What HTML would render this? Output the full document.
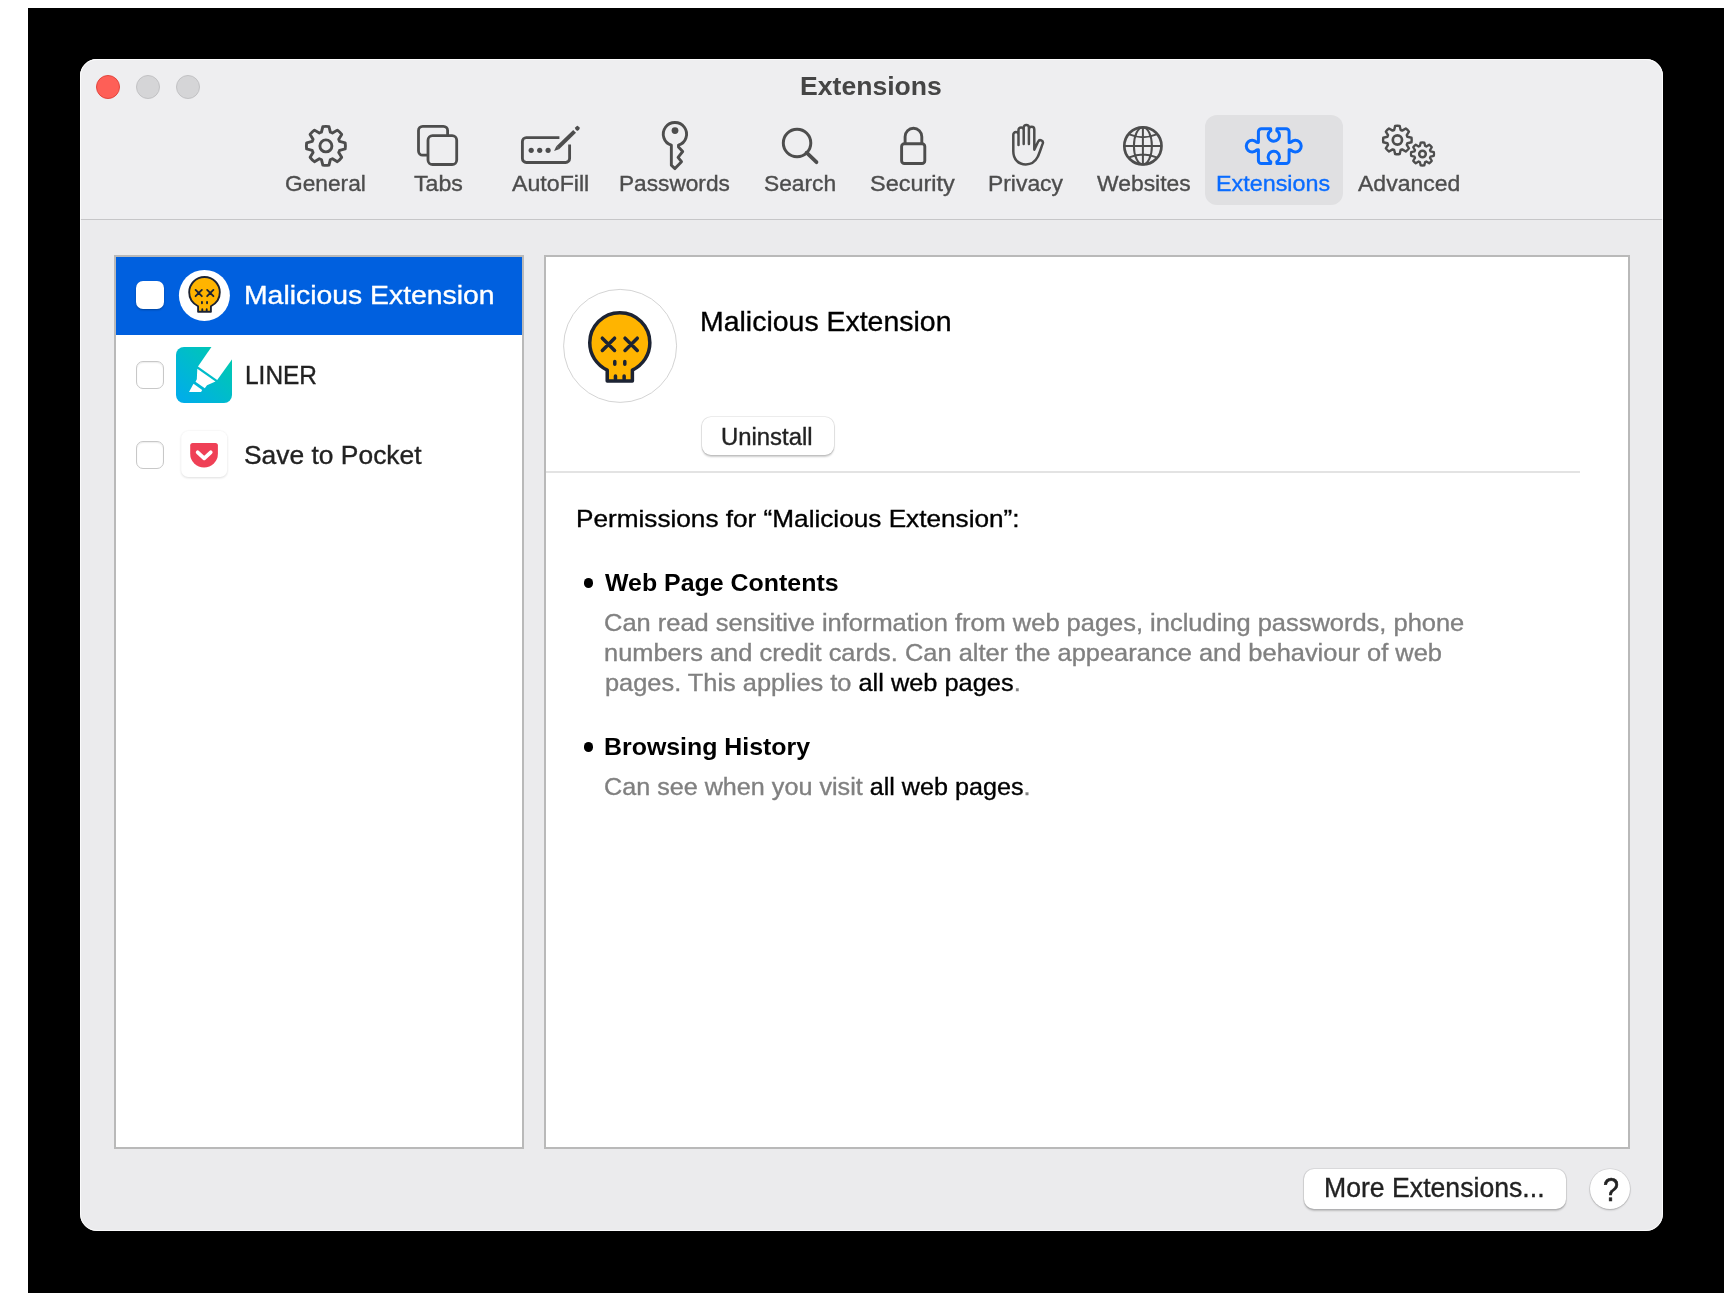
<!DOCTYPE html>
<html><head><meta charset="utf-8"><title>Extensions</title>
<style>
html,body{margin:0;padding:0;background:#fff;}
body{width:1731px;height:1298px;position:relative;overflow:hidden;font-family:"Liberation Sans",sans-serif;}
.abs{position:absolute;box-sizing:border-box;}
.t{position:absolute;white-space:nowrap;will-change:opacity;}
#black{left:28px;top:8px;width:1696px;height:1285px;background:#000;}
#win{left:80px;top:59px;width:1583px;height:1172px;background:#ebebed;border-radius:17px;overflow:hidden;}
#tb{left:0;top:0;width:1583px;height:161.2px;background:#eeeef0;border-bottom:1.3px solid #c6c6c8;}
.tl{width:24.4px;height:24.4px;border-radius:50%;top:74.6px;}
.pane{background:#fff;border:2px solid #b9b9b9;}
.btn{background:#fff;box-shadow:0 0 0 0.8px rgba(0,0,0,0.09),0 1.2px 2px rgba(0,0,0,0.20);}
.cb{width:28px;height:28px;border-radius:7px;background:#fff;left:136px;}
</style></head><body>
<div class="abs" id="black"></div>
<div class="abs" id="win"><div class="abs" id="tb"></div></div>
<div class="abs" style="left:80px;top:59px;width:1583px;height:1172px;border-radius:17px;border:1px solid rgba(255,255,255,.8);"></div>
<div class="abs tl" style="left:95.8px;background:#fe5f57;border:1px solid #e2463e;"></div>
<div class="abs tl" style="left:135.7px;background:#d5d5d7;border:1px solid #c2c2c4;"></div>
<div class="abs tl" style="left:175.8px;background:#d5d5d7;border:1px solid #c2c2c4;"></div>
<div class="abs" style="left:1205px;top:115px;width:138px;height:89.5px;border-radius:12px;background:#e0e0e2;"></div>
<div class="abs pane" style="left:114px;top:255px;width:410px;height:894px;"></div>
<div class="abs" style="left:116px;top:257px;width:406px;height:78px;background:#0060df;"></div>
<div class="abs cb" style="top:281px;box-shadow:0 1px 2px rgba(0,0,0,.3);"></div>
<div class="abs cb" style="top:361px;border:1px solid #c8c8c8;box-shadow:inset 0 1px 1.500px rgba(0,0,0,.08);"></div>
<div class="abs cb" style="top:441px;border:1px solid #c8c8c8;box-shadow:inset 0 1px 1.500px rgba(0,0,0,.08);"></div>
<div class="abs pane" style="left:544px;top:255px;width:1086px;height:894px;"></div>
<div class="abs" style="left:546px;top:471px;width:1034px;height:2px;background:#e3e3e3;"></div>
<div class="abs btn" style="left:701.6px;top:416.6px;width:132.8px;height:38.8px;border-radius:9px;"></div>
<div class="abs btn" style="left:1303.6px;top:1168.9px;width:262.6px;height:40.1px;border-radius:10px;"></div>
<div class="abs btn" style="left:1590px;top:1169px;width:40px;height:40px;border-radius:50%;"></div>
<div class="abs" style="left:583.5px;top:578.35px;width:9.5px;height:9.5px;border-radius:50%;background:#000;"></div>
<div class="abs" style="left:583.5px;top:742.35px;width:9.5px;height:9.5px;border-radius:50%;background:#000;"></div>
<svg class="abs" style="left:0;top:0" width="1731" height="1298" viewBox="0 0 1731 1298">
<path d="M321.45 132.20 L322.85 126.64 A19.50 19.50 0 0 1 328.95 126.64 L330.35 132.20 A14.40 14.40 0 0 1 332.44 133.07 L337.36 130.12 A19.50 19.50 0 0 1 341.68 134.44 L338.73 139.36 A14.40 14.40 0 0 1 339.60 141.45 L345.16 142.85 A19.50 19.50 0 0 1 345.16 148.95 L339.60 150.35 A14.40 14.40 0 0 1 338.73 152.44 L341.68 157.36 A19.50 19.50 0 0 1 337.36 161.68 L332.44 158.73 A14.40 14.40 0 0 1 330.35 159.60 L328.95 165.16 A19.50 19.50 0 0 1 322.85 165.16 L321.45 159.60 A14.40 14.40 0 0 1 319.36 158.73 L314.44 161.68 A19.50 19.50 0 0 1 310.12 157.36 L313.07 152.44 A14.40 14.40 0 0 1 312.20 150.35 L306.64 148.95 A19.50 19.50 0 0 1 306.64 142.85 L312.20 141.45 A14.40 14.40 0 0 1 313.07 139.36 L310.12 134.44 A19.50 19.50 0 0 1 314.44 130.12 L319.36 133.07 A14.40 14.40 0 0 1 321.45 132.20 Z" fill="none" stroke="#4d4d4d" stroke-width="2.9" stroke-linejoin="round"/>
<circle cx="325.9" cy="145.9" r="6" fill="none" stroke="#4d4d4d" stroke-width="2.9"/>
<path d="M428 155.2 H422.7 a4.2 4.2 0 0 1 -4.2 -4.2 V130.5 a4.2 4.2 0 0 1 4.2 -4.2 H443.4 a4.2 4.2 0 0 1 4.2 4.2 V135.6" fill="none" stroke="#4d4d4d" stroke-width="2.8"/>
<rect x="428" y="135.6" width="28.7" height="28.9" rx="4.6" fill="none" stroke="#4d4d4d" stroke-width="2.8"/>
<path d="M559.4 137.6 H526.3 a3.9 3.9 0 0 0 -3.9 3.9 V158.6 a3.9 3.9 0 0 0 3.9 3.9 H565.7 a3.9 3.9 0 0 0 3.9 -3.9 V144.4" fill="none" stroke="#4d4d4d" stroke-width="2.85"/>
<circle cx="531.2" cy="150.3" r="2.6" fill="#4d4d4d"/>
<circle cx="539.7" cy="150.3" r="2.6" fill="#4d4d4d"/>
<circle cx="548.1" cy="150.3" r="2.6" fill="#4d4d4d"/>
<path d="M558 147.5 L574.6 131.4" stroke="#4d4d4d" stroke-width="4"/>
<path d="M554.1 150.9 L556.4 145.9 L559.6 149.1 Z" fill="#4d4d4d"/>
<rect x="575.3" y="126.2" width="4.2" height="4.2" rx="1.5" transform="rotate(45 577.4 128.3)" fill="#4d4d4d"/>
<path d="M671.35 145.2 A11.65 11.65 0 1 1 678.5 145.2 L678.5 146.9 L682.7 151.5 L678.05 157.3 L681.5 161.7 L674.96 168.6 L671.35 165.2 Z" fill="none" stroke="#4d4d4d" stroke-width="2.9" stroke-linejoin="round"/>
<circle cx="675" cy="130.6" r="3.4" fill="#4d4d4d"/>
<circle cx="797.05" cy="142.95" r="13.75" fill="none" stroke="#4d4d4d" stroke-width="2.95"/>
<path d="M806.6 152.600 L816.500 162.200" stroke="#4d4d4d" stroke-width="3.7" stroke-linecap="round"/>
<rect x="901.6" y="143.8" width="23.2" height="19.7" rx="2.8" fill="none" stroke="#4d4d4d" stroke-width="2.9"/>
<path d="M905.1 143.8 V136.65 a8.35 8.35 0 0 1 16.7 0 V143.8" fill="none" stroke="#4d4d4d" stroke-width="2.9"/>
<path d="M1018.5 134.7 A2.6 2.6 0 0 0 1013.3 134.7 V151.3 C1013.3 159.5 1018.5 164.4 1025.8 164.4 C1032.5 164.4 1035.8 160.5 1037.6 157 C1039.6 153 1041 148 1042.8 143.4 A2.5 2.5 0 0 0 1038.2 141.5 L1034.3 149.6 V129.5 A2.7 2.7 0 0 0 1028.9 129.5 M1018.5 145 V130 A2.6 2.6 0 0 1 1023.7 130 M1023.7 144 V127.5 A2.6 2.6 0 0 1 1028.9 127.5 V144" fill="none" stroke="#4d4d4d" stroke-width="2.5" stroke-linejoin="round" stroke-linecap="round"/>
<circle cx="1142.9" cy="145.9" r="18.6" fill="none" stroke="#4d4d4d" stroke-width="2.7"/>
<ellipse cx="1142.9" cy="145.9" rx="9" ry="18.6" fill="none" stroke="#4d4d4d" stroke-width="2"/>
<path d="M1142.9 127.3 V164.5 M1124.3 145.9 H1161.5 M1129.2 134.4 Q1142.9 140 1156.6 134.4 M1129.2 157.4 Q1142.9 151.8 1156.6 157.4" fill="none" stroke="#4d4d4d" stroke-width="2"/>
<path d="M1261.4 128.7 H1270.6 L1270.8 130.8 A5.66 5.66 0 1 0 1276.8 130.8 L1277 128.7 H1286.1 a3 3 0 0 1 3 3 V142.4 L1290.9 142.2 A5.9 5.9 0 1 1 1290.9 150 L1289.1 149.8 V160.5 a3 3 0 0 1 -3 3 H1277 L1276.8 161.8 A5.66 5.66 0 1 0 1270.8 161.8 L1270.6 163.5 H1261.4 a3 3 0 0 1 -3 -3 V149.8 L1256.6 150 A5.9 5.9 0 1 1 1256.6 142.2 L1258.4 142.4 V131.7 a3 3 0 0 1 3 -3 Z" fill="none" stroke="#0a6cff" stroke-width="3" stroke-linejoin="round"/>
<path d="M1394.16 130.01 L1395.16 125.88 A14.30 14.30 0 0 1 1399.64 125.88 L1400.64 130.01 A10.50 10.50 0 0 1 1402.17 130.64 L1405.81 128.43 A14.30 14.30 0 0 1 1408.97 131.59 L1406.76 135.23 A10.50 10.50 0 0 1 1407.39 136.76 L1411.52 137.76 A14.30 14.30 0 0 1 1411.52 142.24 L1407.39 143.24 A10.50 10.50 0 0 1 1406.76 144.77 L1408.97 148.41 A14.30 14.30 0 0 1 1405.81 151.57 L1402.17 149.36 A10.50 10.50 0 0 1 1400.64 149.99 L1399.64 154.12 A14.30 14.30 0 0 1 1395.16 154.12 L1394.16 149.99 A10.50 10.50 0 0 1 1392.63 149.36 L1388.99 151.57 A14.30 14.30 0 0 1 1385.83 148.41 L1388.04 144.77 A10.50 10.50 0 0 1 1387.41 143.24 L1383.28 142.24 A14.30 14.30 0 0 1 1383.28 137.76 L1387.41 136.76 A10.50 10.50 0 0 1 1388.04 135.23 L1385.83 131.59 A14.30 14.30 0 0 1 1388.99 128.43 L1392.63 130.64 A10.50 10.50 0 0 1 1394.16 130.01 Z" fill="none" stroke="#4d4d4d" stroke-width="2.4" stroke-linejoin="round"/>
<circle cx="1397.4" cy="140" r="4.6" fill="none" stroke="#4d4d4d" stroke-width="2.7"/>
<path d="M1419.90 146.01 L1420.70 142.64 A11.50 11.50 0 0 1 1424.30 142.64 L1425.10 146.01 A8.40 8.40 0 0 1 1426.31 146.52 L1429.26 144.70 A11.50 11.50 0 0 1 1431.80 147.24 L1429.98 150.19 A8.40 8.40 0 0 1 1430.49 151.40 L1433.86 152.20 A11.50 11.50 0 0 1 1433.86 155.80 L1430.49 156.60 A8.40 8.40 0 0 1 1429.98 157.81 L1431.80 160.76 A11.50 11.50 0 0 1 1429.26 163.30 L1426.31 161.48 A8.40 8.40 0 0 1 1425.10 161.99 L1424.30 165.36 A11.50 11.50 0 0 1 1420.70 165.36 L1419.90 161.99 A8.40 8.40 0 0 1 1418.69 161.48 L1415.74 163.30 A11.50 11.50 0 0 1 1413.20 160.76 L1415.02 157.81 A8.40 8.40 0 0 1 1414.51 156.60 L1411.14 155.80 A11.50 11.50 0 0 1 1411.14 152.20 L1414.51 151.40 A8.40 8.40 0 0 1 1415.02 150.19 L1413.20 147.24 A11.50 11.50 0 0 1 1415.74 144.70 L1418.69 146.52 A8.40 8.40 0 0 1 1419.90 146.01 Z" fill="none" stroke="#4d4d4d" stroke-width="2.3" stroke-linejoin="round"/>
<circle cx="1422.5" cy="154" r="3.3" fill="none" stroke="#4d4d4d" stroke-width="2.5"/>
<circle cx="204.4" cy="295.4" r="25.5" fill="#fff"/>
<g transform="translate(204.5 294.6) scale(0.567)">
<path d="M-11.3 30.3 V20.5 C-21.000 15.700 -27.000 6.500 -27.000 -4.000 A27 27 0 0 1 27 -4 C27.000 6.500 21.000 15.700 11.300 20.500 V30.3 Z" fill="#ffb400" stroke="#1c2333" stroke-width="3.3" stroke-linejoin="round"/>
<path d="M-15.7 -8.2 L-4.7 2.8 M-4.7 -8.2 L-15.7 2.8 M4.7 -8.2 L15.7 2.8 M15.7 -8.2 L4.7 2.8" stroke="#1c2333" stroke-width="3.3" stroke-linecap="round"/>
<path d="M-4.5 12.8 V15.2 M4.5 12.8 V15.2" stroke="#1c2333" stroke-width="3.3" stroke-linecap="round"/>
<path d="M-3.9 25.8 V28.7 M3.9 25.8 V28.7" stroke="#1c2333" stroke-width="3.3" stroke-linecap="round"/>
</g>
<defs><linearGradient id="lg" x1="0" y1="1" x2="1" y2="0"><stop offset="0.1" stop-color="#00aee8"/><stop offset="0.9" stop-color="#00c9b0"/></linearGradient><clipPath id="lc"><rect x="176" y="347" width="56" height="56" rx="8"/></clipPath></defs>
<rect x="176" y="347" width="56" height="56" rx="8" fill="url(#lg)"/>
<path d="M212.1 346 L198 366.4 L217.2 379.9 L233 358 L233 346 Z" fill="#fff"/><g clip-path="url(#lc)" fill="#fff"><path d="M197.3 368.7 L215.5 381.6 L207 385.3 L204.8 388.3 L195.5 381.8 L196.8 379.3 Z"/><path d="M193.5 383.8 L202.2 390 L201.1 391.9 L189 391.9 Z"/></g>
<filter id="bl" x="-20%" y="-20%" width="140%" height="140%"><feGaussianBlur stdDeviation="1.3"/></filter>
<rect x="181.2" y="431.6" width="46" height="46.500" rx="7" fill="#000" opacity="0.13" filter="url(#bl)"/>
<rect x="181.2" y="431.1" width="46" height="46" rx="7" fill="#fff"/>
<path d="M192.7 442.9 H215.4 a2.500 2.500 0 0 1 2.500 2.500 V453.700 a13.850 13.850 0 0 1 -27.700 0 V445.400 a2.500 2.500 0 0 1 2.500 -2.500 Z" fill="#ef4056"/>
<path d="M197.7 452.3 L204.200 458.300 L210.700 452.300" fill="none" stroke="#fff" stroke-width="3.8" stroke-linecap="round" stroke-linejoin="round"/>
<circle cx="620.1" cy="345.9" r="56.5" fill="#fff" stroke="#d4d4d4" stroke-width="1"/>
<g transform="translate(619.8 347.3) scale(1.113)">
<path d="M-11.3 30.3 V20.5 C-21.000 15.700 -27.000 6.500 -27.000 -4.000 A27 27 0 0 1 27 -4 C27.000 6.500 21.000 15.700 11.300 20.500 V30.3 Z" fill="#ffb400" stroke="#1c2333" stroke-width="3.15" stroke-linejoin="round"/>
<path d="M-15.7 -8.2 L-4.7 2.8 M-4.7 -8.2 L-15.7 2.8 M4.7 -8.2 L15.7 2.8 M15.7 -8.2 L4.7 2.8" stroke="#1c2333" stroke-width="3.15" stroke-linecap="round"/>
<path d="M-4.5 12.8 V15.2 M4.5 12.8 V15.2" stroke="#1c2333" stroke-width="3.15" stroke-linecap="round"/>
<path d="M-3.9 25.8 V28.7 M3.9 25.8 V28.7" stroke="#1c2333" stroke-width="3.15" stroke-linecap="round"/>
</g>
</svg>
<div class="t" id="lb_General" style="top:168.73px;font-size:22px;line-height:29px;color:#4d4d4d;font-weight:400;left:284.97px;transform:scaleX(1.0329);transform-origin:0 50%;-webkit-text-stroke:0.35px;">General</div>
<div class="t" id="lb_Tabs" style="top:168.73px;font-size:22px;line-height:29px;color:#4d4d4d;font-weight:400;left:413.77px;transform:scaleX(1.0511);transform-origin:0 50%;-webkit-text-stroke:0.35px;">Tabs</div>
<div class="t" id="lb_AutoFill" style="top:168.73px;font-size:22px;line-height:29px;color:#4d4d4d;font-weight:400;left:512.00px;transform:scaleX(1.0528);transform-origin:0 50%;-webkit-text-stroke:0.35px;">AutoFill</div>
<div class="t" id="lb_Passwords" style="top:168.73px;font-size:22px;line-height:29px;color:#4d4d4d;font-weight:400;left:618.75px;transform:scaleX(1.0302);transform-origin:0 50%;-webkit-text-stroke:0.35px;">Passwords</div>
<div class="t" id="lb_Search" style="top:168.73px;font-size:22px;line-height:29px;color:#4d4d4d;font-weight:400;left:763.97px;transform:scaleX(1.0338);transform-origin:0 50%;-webkit-text-stroke:0.35px;">Search</div>
<div class="t" id="lb_Security" style="top:168.73px;font-size:22px;line-height:29px;color:#4d4d4d;font-weight:400;left:869.93px;transform:scaleX(1.0671);transform-origin:0 50%;-webkit-text-stroke:0.35px;">Security</div>
<div class="t" id="lb_Privacy" style="top:168.73px;font-size:22px;line-height:29px;color:#4d4d4d;font-weight:400;left:987.74px;transform:scaleX(1.0394);transform-origin:0 50%;-webkit-text-stroke:0.35px;">Privacy</div>
<div class="t" id="lb_Websites" style="top:168.73px;font-size:22px;line-height:29px;color:#4d4d4d;font-weight:400;left:1097.02px;transform:scaleX(1.0400);transform-origin:0 50%;-webkit-text-stroke:0.35px;">Websites</div>
<div class="t" id="lb_Extensions" style="top:168.73px;font-size:22px;line-height:29px;color:#0a6cff;font-weight:400;left:1216.29px;transform:scaleX(1.0600);transform-origin:0 50%;-webkit-text-stroke:0.35px;">Extensions</div>
<div class="t" id="lb_Advanced" style="top:168.73px;font-size:22px;line-height:29px;color:#4d4d4d;font-weight:400;left:1358.20px;transform:scaleX(1.0454);transform-origin:0 50%;-webkit-text-stroke:0.35px;">Advanced</div>
<div class="t" id="title" style="top:68.79px;font-size:26px;line-height:34px;color:#454545;font-weight:700;left:799.75px;transform:scaleX(1.0228);transform-origin:0 50%;">Extensions</div>
<div class="t" id="row1" style="top:278.42px;font-size:26.5px;line-height:34px;color:#ffffff;font-weight:400;left:243.69px;transform:scaleX(1.0701);transform-origin:0 50%;-webkit-text-stroke:0.35px;">Malicious Extension</div>
<div class="t" id="row2" style="top:359.33px;font-size:25.6px;line-height:33px;color:#222222;font-weight:400;left:244.65px;transform:scaleX(0.9548);transform-origin:0 50%;-webkit-text-stroke:0.35px;">LINER</div>
<div class="t" id="row3" style="top:439.33px;font-size:25.6px;line-height:33px;color:#222222;font-weight:400;left:244.37px;transform:scaleX(1.0314);transform-origin:0 50%;-webkit-text-stroke:0.35px;">Save to Pocket</div>
<div class="t" id="dtitle" style="top:304.01px;font-size:27.4px;line-height:36px;color:#000000;font-weight:400;left:699.53px;transform:scaleX(1.0389);transform-origin:0 50%;-webkit-text-stroke:0.35px;">Malicious Extension</div>
<div class="t" id="unins" style="top:421.70px;font-size:23.1px;line-height:30px;color:#222222;font-weight:400;left:721.34px;transform:scaleX(1.0337);transform-origin:0 50%;-webkit-text-stroke:0.35px;">Uninstall</div>
<div class="t" id="perm" style="top:502.58px;font-size:24.3px;line-height:32px;color:#000000;font-weight:400;left:575.64px;transform:scaleX(1.0770);transform-origin:0 50%;-webkit-text-stroke:0.35px;">Permissions for “Malicious Extension”:</div>
<div class="t" id="h1" style="top:567.82px;font-size:23.6px;line-height:31px;color:#000000;font-weight:700;left:604.62px;transform:scaleX(1.0563);transform-origin:0 50%;">Web Page Contents</div>
<div class="t" id="p1" style="top:606.55px;font-size:24.4px;line-height:32px;color:#808080;font-weight:400;left:604.26px;transform:scaleX(1.0436);transform-origin:0 50%;-webkit-text-stroke:0.35px;">Can read sensitive information from web pages, including passwords, phone</div>
<div class="t" id="p2" style="top:636.55px;font-size:24.4px;line-height:32px;color:#808080;font-weight:400;left:604.04px;transform:scaleX(1.0422);transform-origin:0 50%;-webkit-text-stroke:0.35px;">numbers and credit cards. Can alter the appearance and behaviour of web</div>
<div class="t" id="p3" style="top:666.55px;font-size:24.4px;line-height:32px;color:#808080;font-weight:400;left:604.55px;transform:scaleX(1.0404);transform-origin:0 50%;-webkit-text-stroke:0.35px;">pages. This applies to <span style="color:#000">all web pages</span>.</div>
<div class="t" id="h2" style="top:731.82px;font-size:23.6px;line-height:31px;color:#000000;font-weight:700;left:603.74px;transform:scaleX(1.0552);transform-origin:0 50%;">Browsing History</div>
<div class="t" id="p4" style="top:770.55px;font-size:24.4px;line-height:32px;color:#808080;font-weight:400;left:604.27px;transform:scaleX(1.0315);transform-origin:0 50%;-webkit-text-stroke:0.35px;">Can see when you visit <span style="color:#000">all web pages</span>.</div>
<div class="t" id="more" style="top:1171.14px;font-size:27.0px;line-height:35px;color:#222222;font-weight:400;left:1324.22px;transform:scaleX(0.9864);transform-origin:0 50%;-webkit-text-stroke:0.35px;">More Extensions...</div>
<div class="t" id="q" style="top:1167.97px;font-size:33px;line-height:43px;color:#222222;font-weight:400;left:1602.69px;transform:scaleX(0.8706);transform-origin:0 50%;-webkit-text-stroke:0.6px #222;">?</div>
</body></html>
